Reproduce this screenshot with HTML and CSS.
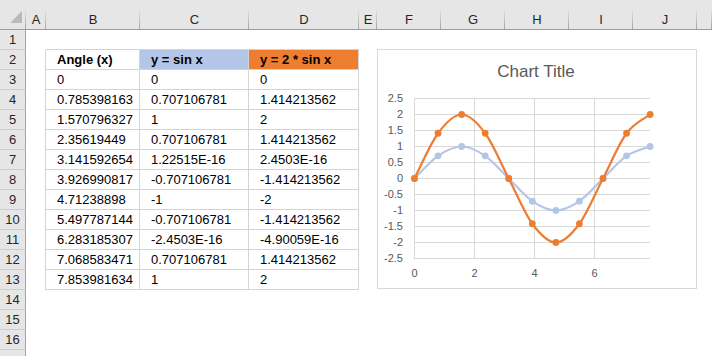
FILE: index.html
```html
<!DOCTYPE html>
<html>
<head>
  <title>Sine chart</title>
  <link rel="stylesheet" href="styles.css">
</head>
<body>
  <div class="sheet">
    <div class="strip"></div>

    <table class="grid">
      <colgroup>
        <col class="w-rh"><col class="w-a"><col class="w-b"><col class="w-c"><col class="w-d"><col class="w-e">
        <col class="w-f"><col class="w-f"><col class="w-f"><col class="w-f"><col class="w-f"><col class="w-k">
      </colgroup>

      <!-- column letters -->
      <tr class="colhead">
        <th class="corner"><svg width="14" height="14" viewBox="0 0 14 14"><polygon points="13,1 13,13 1,13" fill="#b9b9b9"/></svg></th>
        <th>A</th><th>B</th><th>C</th><th>D</th><th>E</th><th>F</th><th>G</th><th>H</th><th>I</th><th>J</th><th></th>
      </tr>

      <tr><th class="rh">1</th><td></td><td class="top"></td><td class="top"></td><td class="top"></td><td colspan="7"></td></tr>
      <tr><th class="rh">2</th><td class="edge"></td><td class="cell hd">Angle (x)</td><td class="cell hd blue">y = sin x</td><td class="cell hd orange">y = 2 * sin x</td><td colspan="7"></td></tr>
      <tr><th class="rh">3</th><td class="edge"></td><td class="cell">0</td><td class="cell">0</td><td class="cell">0</td><td colspan="7"></td></tr>
      <tr><th class="rh">4</th><td class="edge"></td><td class="cell">0.785398163</td><td class="cell">0.707106781</td><td class="cell">1.414213562</td><td colspan="7"></td></tr>
      <tr><th class="rh">5</th><td class="edge"></td><td class="cell">1.570796327</td><td class="cell">1</td><td class="cell">2</td><td colspan="7"></td></tr>
      <tr><th class="rh">6</th><td class="edge"></td><td class="cell">2.35619449</td><td class="cell">0.707106781</td><td class="cell">1.414213562</td><td colspan="7"></td></tr>
      <tr><th class="rh">7</th><td class="edge"></td><td class="cell">3.141592654</td><td class="cell">1.22515E-16</td><td class="cell">2.4503E-16</td><td colspan="7"></td></tr>
      <tr><th class="rh">8</th><td class="edge"></td><td class="cell">3.926990817</td><td class="cell">-0.707106781</td><td class="cell">-1.414213562</td><td colspan="7"></td></tr>
      <tr><th class="rh">9</th><td class="edge"></td><td class="cell">4.71238898</td><td class="cell">-1</td><td class="cell">-2</td><td colspan="7"></td></tr>
      <tr><th class="rh">10</th><td class="edge"></td><td class="cell">5.497787144</td><td class="cell">-0.707106781</td><td class="cell">-1.414213562</td><td colspan="7"></td></tr>
      <tr><th class="rh">11</th><td class="edge"></td><td class="cell">6.283185307</td><td class="cell">-2.4503E-16</td><td class="cell">-4.90059E-16</td><td colspan="7"></td></tr>
      <tr><th class="rh">12</th><td class="edge"></td><td class="cell">7.068583471</td><td class="cell">0.707106781</td><td class="cell">1.414213562</td><td colspan="7"></td></tr>
      <tr><th class="rh">13</th><td class="edge"></td><td class="cell">7.853981634</td><td class="cell">1</td><td class="cell">2</td><td colspan="7"></td></tr>
      <tr><th class="rh">14</th><td colspan="11"></td></tr>
      <tr><th class="rh">15</th><td colspan="11"></td></tr>
      <tr><th class="rh">16</th><td colspan="11"></td></tr>
      <tr><th class="rh"></th><td colspan="11"></td></tr>
    </table>

    <!-- floating chart over F2:J13 -->
    <div class="chart">
      <svg width="318" height="238" viewBox="378 50 318 238">
        <defs>
          <marker id="dot-blue" markerWidth="8" markerHeight="8" refX="4" refY="4" markerUnits="userSpaceOnUse">
            <circle cx="4" cy="4" r="3.4" fill="#b4c6e7"/>
          </marker>
          <marker id="dot-orange" markerWidth="8" markerHeight="8" refX="4" refY="4" markerUnits="userSpaceOnUse">
            <circle cx="4" cy="4" r="3.4" fill="#ed7d31"/>
          </marker>
        </defs>

        <text class="title" x="536" y="77" text-anchor="middle">Chart Title</text>

        <path class="gridline" d="M414 98.5H650 M414 114.5H650 M414 130.5H650 M414 146.5H650 M414 162.5H650 M414 178.5H650
          M414 194.5H650 M414 210.5H650 M414 226.5H650 M414 242.5H650 M414 258.5H650
          M414.5 98V259 M474.5 98V259 M534.5 98V259 M594.5 98V259"/>

        <g class="ylabels" text-anchor="end">
          <text x="403" y="102">2.5</text>
          <text x="403" y="118">2</text>
          <text x="403" y="134">1.5</text>
          <text x="403" y="150">1</text>
          <text x="403" y="166">0.5</text>
          <text x="403" y="182">0</text>
          <text x="403" y="198">-0.5</text>
          <text x="403" y="214">-1</text>
          <text x="403" y="230">-1.5</text>
          <text x="403" y="246">-2</text>
          <text x="403" y="262">-2.5</text>
        </g>
        <g class="xlabels" text-anchor="middle">
          <text x="414.5" y="277">0</text>
          <text x="474.5" y="277">2</text>
          <text x="534.5" y="277">4</text>
          <text x="594.5" y="277">6</text>
        </g>

        <g transform="translate(0.5 0.5)">
          <path class="series blue" d="M414,178 C417.93,174.23 429.71,160.70 437.56,155.37 C445.41,150.04 453.27,146 461.12,146
            C468.97,146 476.84,150.04 484.69,155.37 C492.54,160.70 500.40,170.46 508.25,178
            C516.10,185.54 523.96,195.30 531.81,200.63 C539.66,205.96 547.52,210 555.37,210
            C563.22,210 571.08,205.96 578.93,200.63 C586.78,195.30 594.65,185.54 602.5,178
            C610.35,170.46 618.21,160.70 626.06,155.37 C633.91,150.04 645.69,147.56 649.62,146"/>
          <path class="series orange" d="M414,178 C417.93,170.46 429.71,143.42 437.56,132.75 C445.41,122.08 453.27,114 461.12,114
            C468.97,114 476.84,122.08 484.69,132.75 C492.54,143.42 500.40,162.92 508.25,178
            C516.10,193.08 523.96,212.58 531.81,223.25 C539.66,233.92 547.52,242 555.37,242
            C563.22,242 571.08,233.92 578.93,223.25 C586.78,212.58 594.65,193.08 602.5,178
            C610.35,162.92 618.21,143.42 626.06,132.75 C633.91,122.08 645.69,117.12 649.62,114"/>
        </g>
      </svg>
    </div>
  </div>
</body>
</html>
```

FILE: styles.css
```css
* {
  box-sizing: border-box;
}
body {
  margin: 0;
  background-color: #fff;
  color: #000;
  font-family: "Liberation Sans", Arial, sans-serif;
  font-size: 13px;
}
.sheet {
  position: relative;
  width: 712px;
  height: 356px;
  overflow: hidden;
}
.strip {
  height: 10px;
  background-color: #e6e6e6;
}

/* grid */
.grid {
  width: 712px;
  table-layout: fixed;
  border-collapse: separate;
  border-spacing: 0;
}
.grid tr {
  height: 20px;
}
.grid th,
.grid td {
  height: 20px;
  padding: 0;
  border: 0;
  white-space: nowrap;
  overflow: hidden;
  line-height: 19px;
}
.w-rh { width: 26px; }
.w-a { width: 20px; }
.w-b { width: 94px; }
.w-c { width: 109px; }
.w-d { width: 110px; }
.w-e { width: 18px; }
.w-f { width: 64px; }
.w-k { width: 15px; }

.colhead th {
  font-weight: normal;
  color: #262626;
  background: #e6e6e6 linear-gradient(#e2e2e2, #a3a3a3) right top / 1px 100% no-repeat;
  border-bottom: 1px solid #9e9e9e;
}
.colhead .corner {
  position: relative;
}
.corner svg {
  position: absolute;
  left: 9px;
  top: 0;
  display: block;
}
.rh {
  font-weight: normal;
  color: #262626;
  text-align: center;
  background-color: #e6e6e6;
  border-right: 1px solid #a3a3a3 !important;
  border-bottom: 1px solid #cdcdcd !important;
}

/* table B2:D13 */
.top {
  border-bottom: 1px solid #d4d4d4 !important;
}
.edge {
  border-right: 1px solid #d4d4d4 !important;
}
.cell {
  padding-left: 11px !important;
  border-right: 1px solid #d4d4d4 !important;
  border-bottom: 1px solid #d4d4d4 !important;
}
.hd {
  font-weight: bold;
}
.blue {
  background-color: #b4c6e7;
}
.orange {
  background-color: #ed7d31;
}

/* chart */
.chart {
  position: absolute;
  left: 377px;
  top: 49px;
  width: 320px;
  height: 240px;
  background-color: #fff;
  border: 1px solid #d9d9d9;
}
.chart svg {
  display: block;
  font-family: "Liberation Sans", Arial, sans-serif;
}
.title {
  font-size: 17px;
  fill: #595959;
}
.gridline {
  fill: none;
  stroke: #d9d9d9;
  stroke-width: 1;
}
.ylabels text,
.xlabels text {
  font-size: 11px;
  fill: #595959;
}
.series {
  fill: none;
  stroke-width: 2.2;
  stroke-linejoin: round;
}
.series.blue {
  stroke: #b4c6e7;
  marker-start: url(#dot-blue);
  marker-mid: url(#dot-blue);
  marker-end: url(#dot-blue);
}
.series.orange {
  stroke: #ed7d31;
  marker-start: url(#dot-orange);
  marker-mid: url(#dot-orange);
  marker-end: url(#dot-orange);
}
```
